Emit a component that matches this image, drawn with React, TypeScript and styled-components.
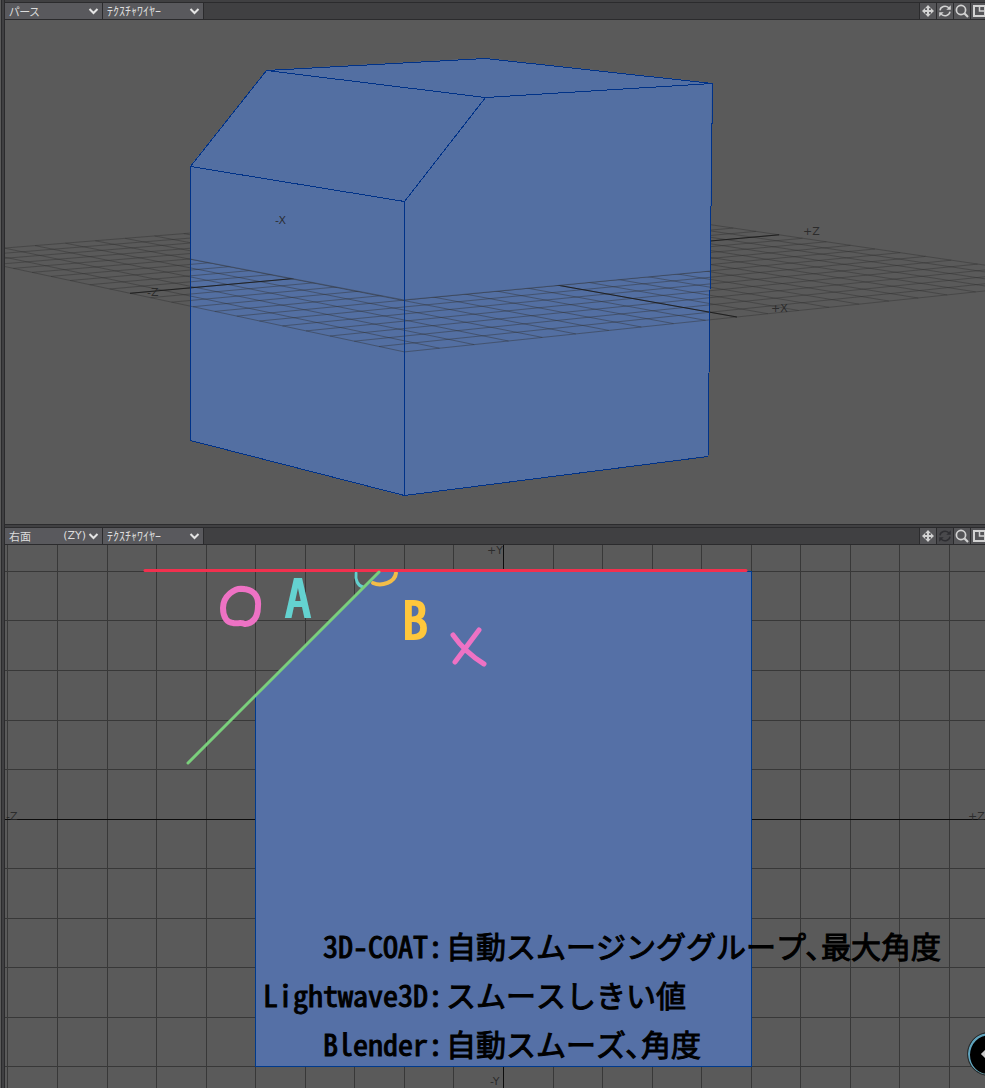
import React from "react";
import styled, { createGlobalStyle } from "styled-components";

const GlobalStyle = createGlobalStyle`
  *, *::before, *::after { box-sizing: border-box; }
  body { margin: 0; background: #5a5a5a; font-family: "Noto Sans CJK JP", sans-serif; }
`;

const Shell = styled.main`
  display: grid;
  grid-template-columns: 5px minmax(0, 1fr);
  min-height: 100vh;
  overflow: hidden;
`;

const Gutter = styled.div`
  background: #404042;
  border-left: 1px solid #5a5a5a;
  border-right: 1px solid #2b2b2d;
  box-shadow: inset 1px 0 #2b2b2d;
`;

const Panels = styled.div`
  display: grid;
  grid-template-rows: 525px minmax(563px, 1fr);
`;

const Panel = styled.section`
  display: flex;
  flex-direction: column;
  min-width: 0;
`;

const Toolbar = styled.header`
  display: flex;
  justify-content: space-between;
  height: 20px;
  flex: none;
  background: #404042;
  border-top: 2px solid #404042;
  border-bottom: 1px solid #2b2b2d;
  box-shadow: inset 0 1px #2b2b2d;
  padding-top: 1px;
`;

const Group = styled.div`
  display: flex;
`;

const ToolGroup = styled(Group)`
  margin-right: -2px;
`;

const Picker = styled.label<{ $width: number }>`
  position: relative;
  display: flex;
  width: ${(p) => p.$width}px;
  background: #59595d;
  border-right: 1px solid #2b2b2d;
`;

const Select = styled.select<{ $size: number }>`
  appearance: none;
  width: 100%;
  height: 16px;
  margin: 0;
  padding: 0 4px;
  border: 0;
  border-radius: 0;
  background: transparent;
  color: #dcdcdc;
  font-family: "Noto Sans CJK JP", sans-serif;
  font-size: ${(p) => p.$size}px;
  line-height: 16px;
  font-feature-settings: "palt";
`;

const PickerNote = styled.span`
  position: absolute;
  right: 16px;
  top: 0;
  color: #dcdcdc;
  font-family: "DejaVu Sans", sans-serif;
  font-size: 11px;
  line-height: 16px;
  pointer-events: none;
`;

const PickerArrow = styled.svg`
  position: absolute;
  right: 3px;
  top: 3px;
  width: 11px;
  height: 10px;
  pointer-events: none;
`;

const Tool = styled.button`
  width: 17px;
  height: 16px;
  flex: none;
  padding: 0;
  border: 0;
  border-left: 1px solid #2b2b2d;
  background: #555558;
  color: #d2d2d2;
  &:disabled { background: #49494c; color: #2e2e32; }
  svg { display: block; }
`;

const Viewport = styled.div`
  position: relative;
  flex: 1;
  min-height: 0;
  overflow: hidden;
  background: #5a5a5a;
`;

const FramedViewport = styled(Viewport)`
  border-bottom: 1px solid #2b2b2d;
`;

const Scene = styled.svg`
  display: block;
  width: 100%;
  height: auto;
`;

const AxisLabel = styled.text`
  font-family: "DejaVu Sans", sans-serif;
  font-size: 11px;
  fill: #262626;
  fill-opacity: 0.9;
`;

const Mark = styled.text`
  font-family: "Noto Sans Mono CJK JP", "Noto Sans CJK JP", sans-serif;
  font-feature-settings: "hwid";
  font-size: 52px;
  font-weight: 400;
  stroke: currentColor;
  stroke-width: 2px;
  fill: currentColor;
`;

const Notes = styled.dl`
  position: absolute;
  left: 236px;
  top: 376px;
  display: grid;
  grid-template-columns: 204px max-content;
  margin: 0;
  color: #000;
  font-family: "Noto Sans Mono CJK JP", "Noto Sans CJK JP", sans-serif;
  font-feature-settings: "hwid";
  font-size: 30px;
  font-weight: 400;
  line-height: 49px;
  -webkit-text-stroke: 1px #000;
`;

const NoteName = styled.dt`
  padding-right: 2px;
  text-align: right;
`;

const NoteText = styled.dd`
  margin: 0;
  padding-left: 1px;
  white-space: nowrap;
`;

const CornerButton = styled.button`
  position: absolute;
  right: -26px;
  bottom: 12px;
  width: 44px;
  height: 44px;
  padding: 0 0 0 12px;
  border: 1px solid #2a2e30;
  border-radius: 50%;
  background: #000;
  box-shadow: inset 1px 1px 0 1px #5fa3bd, inset 0 0 0 1px #5f7f7f;
  svg { display: block; }
`;

function MoveIcon() {
  return (
    <svg width="16" height="16" viewBox="0 0 16 16" fill="currentColor" aria-hidden="true">
      <path d="M8 2l3 3.200H9v1.900h1.900V5L14 8l-3.100 3V8.900H9v1.900h2L8 14l-3-3.200h2V8.900H5.100V11L2 8l3.100-3v2.100H7V5.200H5z" />
    </svg>
  );
}

function RotateIcon() {
  return (
    <svg width="16" height="16" viewBox="0 0 16 16" fill="none" stroke="currentColor" strokeWidth="1.500" aria-hidden="true">
      <path d="M3 7.300C3.500 3.500 8.500 2 11.800 4.800M13 8.700C12.500 12.500 7.500 14 4.200 11.200" />
      <path d="M13.800 2.200v4.600H9.300z M2.200 13.800V9.200h4.500z" fill="currentColor" stroke="none" />
    </svg>
  );
}

function SearchIcon() {
  return (
    <svg width="16" height="16" viewBox="0 0 16 16" fill="none" stroke="currentColor" strokeWidth="1.700" aria-hidden="true">
      <circle cx="7" cy="7" r="4.600" />
      <path d="M10.300 10.300L14 14" strokeWidth="2.200" />
    </svg>
  );
}

function PaneIcon() {
  return (
    <svg width="16" height="16" viewBox="0 0 16 16" fill="none" stroke="currentColor" strokeWidth="2" aria-hidden="true">
      <path d="M3 3h11v10H3z" />
      <path d="M8.500 3v5H14" strokeWidth="1.500" />
    </svg>
  );
}

function ViewToolbar({ view, note, noRotate }: { view: string; note?: string; noRotate?: boolean }) {
  const arrow = (
    <PickerArrow viewBox="0 0 11 10" fill="none" stroke="#e4e4e4" strokeWidth="2">
      <path d="M1.500 3l4 4 4-4" />
    </PickerArrow>
  );
  return (
    <Toolbar>
      <Group>
        <Picker $width={98}>
          <Select $size={11} aria-label="View">
            <option>{view}</option>
          </Select>
          {note && <PickerNote>{note}</PickerNote>}
          {arrow}
        </Picker>
        <Picker $width={101}>
          <Select $size={12} aria-label="Shading">
            <option>ﾃｸｽﾁｬﾜｲﾔｰ</option>
          </Select>
          {arrow}
        </Picker>
      </Group>
      <ToolGroup>
        <Tool aria-label="Pan"><MoveIcon /></Tool>
        <Tool aria-label="Rotate" disabled={noRotate}><RotateIcon /></Tool>
        <Tool aria-label="Zoom"><SearchIcon /></Tool>
        <Tool aria-label="Maximize"><PaneIcon /></Tool>
      </ToolGroup>
    </Toolbar>
  );
}

/* Ground plane coordinates to perspective view coordinates. */
function project(x: number, z: number): [number, number] {
  const w = 1 - 0.008333 * x + 0.005364 * z;
  return [(18.27 * x + 32.1 * z + 444) / w, (1.69 * x - 1.255 * z + 265) / w];
}

function segment(x1: number, z1: number, x2: number, z2: number) {
  const [a, b] = project(x1, z1);
  const [c, d] = project(x2, z2);
  return `M${a.toFixed(1)} ${b.toFixed(1)}L${c.toFixed(1)} ${d.toFixed(1)}`;
}

const GROUND_MIN = -10;
const GROUND_MAX = 12;
const steps = Array.from({ length: GROUND_MAX - GROUND_MIN + 1 }, (_, i) => GROUND_MIN + i);
const groundPath = steps
  .map((n) => segment(n, GROUND_MIN, n, GROUND_MAX) + segment(GROUND_MIN, n, GROUND_MAX, n))
  .join("");
const groundAxes = segment(0, GROUND_MIN, 0, GROUND_MAX) + segment(GROUND_MIN, 0, GROUND_MAX, 0);

function PerspectiveScene() {
  return (
    <Scene viewBox="5 20 980 504" role="img" aria-label="Chamfered cube in perspective">
      <clipPath id="ground-visible">
        <path d="M0 0H190V259L404 300L711 271V0H985V525H0z" />
      </clipPath>
      <path d="M190 166L267 70L485 58L712 83L708 456L404 496L190 440z" fill="#536fa2" />
      <g clipPath="url(#ground-visible)" fill="none">
        <path d={groundPath} stroke="#303030" strokeOpacity="0.450" />
        <path d={groundAxes} stroke="#1c1c1c" strokeOpacity="0.900" />
      </g>
      <path d="M190 259L404 300L711 271" fill="none" stroke="#303030" strokeOpacity="0.450" />
      <g fill="none" stroke="#003288" shapeRendering="crispEdges">
        <path d="M190.500 166.500L266.500 70.500L485.500 58.500L712.500 83.500L708 456.500L404.500 495.500L190.500 440.500z" />
        <path d="M266.500 70.500L485.500 97.500L712.500 83.500M485.500 97.500L404.500 201.500L190.500 166.500M404.500 201.500V495.500" />
      </g>
      <AxisLabel x="275" y="224">-X</AxisLabel>
      <AxisLabel x="147" y="296">-Z</AxisLabel>
      <AxisLabel x="803" y="235">+Z</AxisLabel>
      <AxisLabel x="771" y="312">+X</AxisLabel>
    </Scene>
  );
}

const columns = [7, 57, 107, 156, 206, 255, 305, 354, 404, 453, 553, 602, 652, 701, 751, 800, 850, 899, 949];
const rows = [571, 620, 670, 720, 769, 868, 918, 967, 1017, 1066];
const orthoGrid =
  columns.map((x) => `M${x}.5 545V1088`).join("") + rows.map((y) => `M5 ${y}.5H985`).join("");

function SideScene() {
  return (
    <Scene viewBox="5 545 980 543" role="img" aria-label="Chamfered cube seen from the right, with angles A and B">
      <path d={orthoGrid} stroke="#383838" shapeRendering="crispEdges" />
      <path d="M5 819.500H985M503.500 545V1088" stroke="#0c0c0c" shapeRendering="crispEdges" />
      <path
        d="M255.500 695.500L379.500 571.500H751.500V1066.500H255.500z"
        fill="#5570a6"
        stroke="#003a8c"
        shapeRendering="crispEdges"
      />
      <AxisLabel x="487" y="554">+Y</AxisLabel>
      <AxisLabel x="490" y="1085">-Y</AxisLabel>
      <AxisLabel x="6" y="820">-Z</AxisLabel>
      <AxisLabel x="968" y="820">+Z</AxisLabel>
      <g fill="none" strokeLinecap="round">
        <path d="M356 573C355 580 358 586 363 587" stroke="#64cfce" strokeWidth="3" />
        <path d="M373 583C382 587 395 582 396 573" stroke="#f3bd48" strokeWidth="4" />
        <path d="M145 570.500H746" stroke="#f2304e" strokeWidth="3" />
        <path d="M188 763L379 572" stroke="#7acf7c" strokeWidth="3" />
        <path
          d="M244 589C235 587 223 596 223 608C223 617 227 623 233 623C237 624 241 622 245 624C254 623 258 617 258 606C259 596 253 588 240 589"
          stroke="#ee72c4"
          strokeWidth="6"
        />
        <path d="M453 635C460 645 471 656 484 664M479 630L455 662" stroke="#ee72c4" strokeWidth="5" />
      </g>
      <Mark x="285" y="617" color="#64d2d0">A</Mark>
      <Mark x="402" y="639" color="#ffc73c">B</Mark>
    </Scene>
  );
}

export default function App() {
  return (
    <>
      <GlobalStyle />
      <Shell>
        <Gutter />
        <Panels>
          <Panel>
            <ViewToolbar view="パース" />
            <FramedViewport>
              <PerspectiveScene />
            </FramedViewport>
          </Panel>
          <Panel>
            <ViewToolbar view="右面" note="(ZY)" noRotate />
            <Viewport>
              <SideScene />
              <Notes>
                <NoteName>3D-COAT:</NoteName>
                <NoteText>自動スムージンググループ､最大角度</NoteText>
                <NoteName>Lightwave3D:</NoteName>
                <NoteText>スムースしきい値</NoteText>
                <NoteName>Blender:</NoteName>
                <NoteText>自動スムーズ､角度</NoteText>
              </Notes>
              <CornerButton aria-label="Previous">
                <svg width="12" height="12" viewBox="0 0 12 12" fill="none" stroke="#c8c8c8" strokeWidth="3">
                  <path d="M8 1L3 6l5 5" />
                </svg>
              </CornerButton>
            </Viewport>
          </Panel>
        </Panels>
      </Shell>
    </>
  );
}
